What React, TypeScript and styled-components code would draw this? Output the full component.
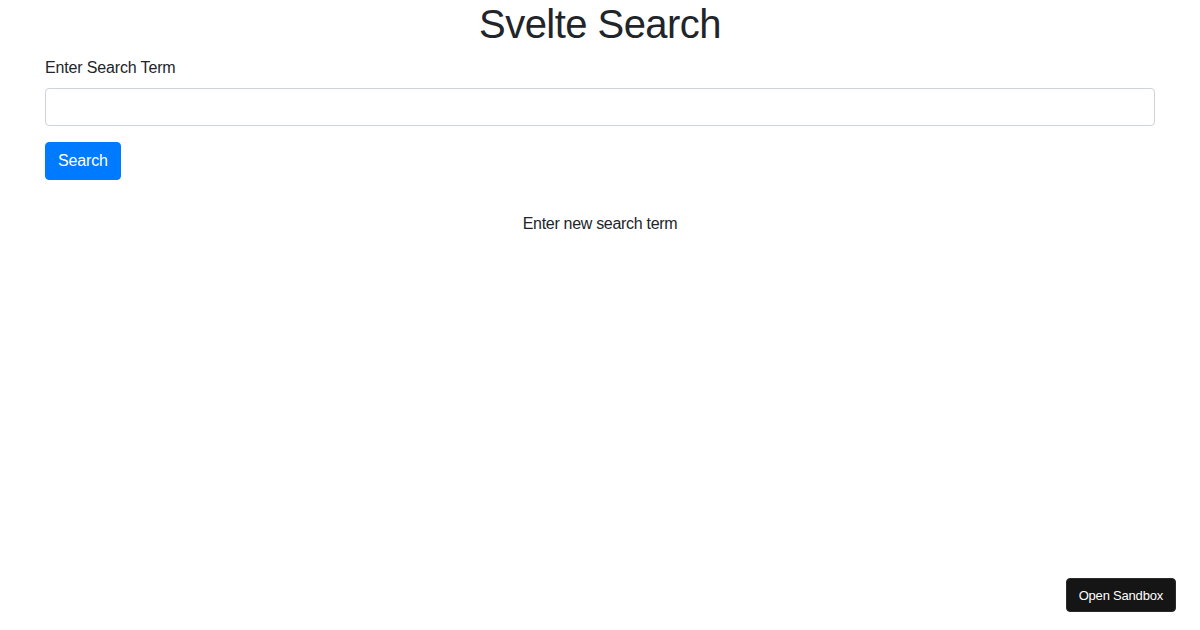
import React, { useState } from "react";
import styled, { createGlobalStyle } from "styled-components";

const Global = createGlobalStyle`
  * { box-sizing: border-box; }
  html, body { margin: 0; padding: 0; background: #fff; }
  body {
    font-family: "Liberation Sans", Arial, Helvetica, sans-serif;
    font-size: 16px;
    line-height: 1.5;
    letter-spacing: -0.3px;
    color: #212529;
  }
`;

const Container = styled.div`
  max-width: 1140px;
  margin: 0 auto;
  padding: 0 15px;
`;

const Title = styled.h1`
  margin: 0 0 8px;
  font-size: 40px;
  font-weight: 500;
  line-height: 1.2;
  letter-spacing: -0.55px;
  text-align: center;
`;

const FormGroup = styled.div`
  margin-bottom: 16px;
`;

const Label = styled.label`
  display: inline-block;
  margin-bottom: 8px;
  letter-spacing: -0.15px;
`;

const Input = styled.input`
  display: block;
  width: 100%;
  height: 38px;
  padding: 6px 12px;
  font: inherit;
  color: #495057;
  background: #fff;
  border: 1px solid #ced4da;
  border-radius: 4px;
  outline: none;
`;

const Button = styled.button`
  display: inline-block;
  height: 38px;
  padding: 6px 12px;
  font: inherit;
  letter-spacing: -0.15px;
  color: #fff;
  background: #007bff;
  border: 1px solid #007bff;
  border-radius: 4px;
  cursor: pointer;
`;

const Message = styled.p`
  margin: 32px 0 0;
  text-align: center;
`;

const SandboxButton = styled.button`
  position: fixed;
  right: 24px;
  bottom: 18px;
  height: 34px;
  padding: 0 12px;
  font-family: "Liberation Sans", Arial, sans-serif;
  font-size: 13px;
  letter-spacing: -0.2px;
  color: #fff;
  background: #151515;
  border: 1px solid #2a2a2a;
  border-radius: 4px;
  cursor: pointer;
`;

export default function App() {
  const [term, setTerm] = useState("");
  return (
    <>
      <Global />
      <Container>
        <Title>Svelte Search</Title>
        <form onSubmit={(e) => e.preventDefault()}>
          <FormGroup>
            <Label htmlFor="term">Enter Search Term</Label>
            <Input id="term" value={term} onChange={(e) => setTerm(e.target.value)} />
          </FormGroup>
          <Button type="submit">Search</Button>
        </form>
        <Message>Enter new search term</Message>
      </Container>
      <SandboxButton>Open Sandbox</SandboxButton>
    </>
  );
}
